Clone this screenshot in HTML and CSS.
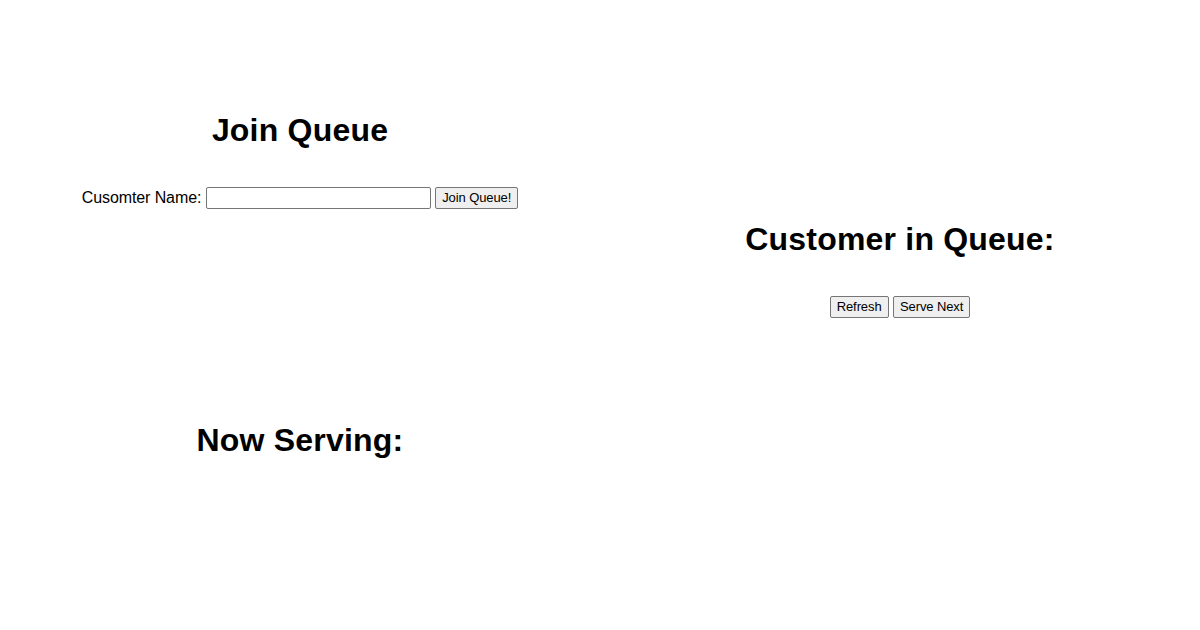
FILE: index.html
```html
<!DOCTYPE html>
<html>
<head>
<meta charset="utf-8">
<link rel="stylesheet" href="styles.css">
<title>Queue</title>
</head>
<body>
<div class="page">
  <div class="col col-left">
    <section class="cell cell-join">
      <h1 class="title">Join Queue</h1>
      <form class="row">
        <label class="label" for="name">Cusomter Name:</label> <input class="field" id="name" type="text"> <button class="btn" type="button">Join Queue!</button>
      </form>
    </section>
    <section class="cell cell-serving">
      <h1 class="title">Now Serving:</h1>
    </section>
  </div>
  <div class="col col-right">
    <section class="cell cell-queue">
      <h1 class="title">Customer in Queue:</h1>
      <div class="row">
        <button class="btn" type="button">Refresh</button> <button class="btn" type="button">Serve Next</button>
      </div>
    </section>
  </div>
</div>
</body>
</html>
```

FILE: styles.css
```css
html, body {
  margin: 0;
  padding: 0;
  background: #ffffff;
}

body {
  font-family: "Liberation Sans", Arial, sans-serif;
  font-size: 16px;
  color: #000000;
}

.page {
  display: grid;
  grid-template-columns: 600px 600px;
  width: 1200px;
  height: 630px;
}

.col-left {
  display: grid;
  grid-template-rows: 315px 315px;
}

.cell {
  display: flex;
  flex-direction: column;
  align-items: center;
}

.cell-join {
  padding-top: 112px;
}

.cell-serving {
  padding-top: 107px;
}

.cell-queue {
  padding-top: 221px;
}

.title {
  margin: 0;
  font-size: 32px;
  font-weight: bold;
  line-height: 37px;
  letter-spacing: 0.2px;
}

.row {
  margin: 37px 0 0 0;
  display: block;
  text-align: center;
  line-height: 22px;
  white-space: nowrap;
}

.label {
  font-size: 16px;
  letter-spacing: -0.1px;
  vertical-align: middle;
}

.field {
  box-sizing: border-box;
  width: 225px;
  height: 22px;
  border: 1px solid #767676;
  border-radius: 2px;
  padding: 1px 2px;
  font-family: "Liberation Sans", Arial, sans-serif;
  font-size: 13.33px;
  vertical-align: middle;
  background: #ffffff;
}

.btn {
  box-sizing: border-box;
  height: 22px;
  padding: 1px 6px;
  border: 1px solid #767676;
  border-radius: 2px;
  background: #efefef;
  color: #000000;
  font-family: "Liberation Sans", Arial, sans-serif;
  font-size: 13px;
  letter-spacing: -0.1px;
  vertical-align: middle;
}
```
